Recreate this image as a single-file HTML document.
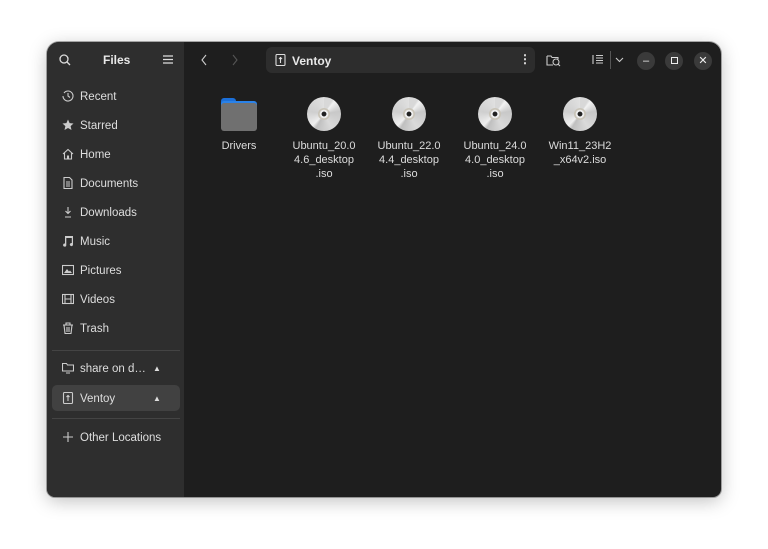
<!DOCTYPE html><html><head><style>
*{margin:0;padding:0;box-sizing:border-box}
body{width:768px;height:549px;background:#fff;font-family:"Liberation Sans",sans-serif;overflow:hidden;position:relative}
.win{position:absolute;left:47px;top:42px;width:674px;height:455px;border-radius:12px 12px 8px 8px;background:#1e1e1e;overflow:hidden;box-shadow:0 4px 18px rgba(0,0,0,.25),0 0 0 1px rgba(0,0,0,.3)}
.side{position:absolute;left:0;top:0;width:137px;height:455px;background:#2e2e2e;color:#dedede}
.it{position:absolute;left:5px;width:128px;height:26px;font-size:11.5px;line-height:28px;padding-left:28px}
.it svg{position:absolute;left:10px;top:7px}
.sep{position:absolute;left:5px;width:128px;height:1px;background:#444}
.t{position:absolute;color:#e8e8e8}
.lab{position:absolute;width:80px;text-align:center;font-size:11px;line-height:14px;color:#dcdcdc;top:96px}
.disc{position:absolute;top:55px;width:34px;height:34px;border-radius:50%;background:conic-gradient(#d8d8d8 0 30deg,#f2f2f2 40deg,#c8c8c8 80deg,#dadada 150deg,#bfbfbf 210deg,#efefef 225deg,#cfcfcf 280deg,#e0e0e0 360deg)}
.disc:after{content:"";position:absolute;left:11px;top:11px;width:12px;height:12px;border-radius:50%;background:radial-gradient(#222 0 2.2px,#eee 2.6px 4px,#c9c4b8 4.5px)}
.btn{position:absolute;top:10px;width:18px;height:18px;border-radius:50%;background:#3a3a3a;color:#eee;font-size:11px;text-align:center;line-height:18px}
</style></head><body>
<div class="win">
<div class="side">
<svg style="position:absolute;left:12px;top:12px" width="12" height="12" viewBox="0 0 12 12" fill="none" stroke="#ddd" stroke-width="1.3"><circle cx="5" cy="5" r="4"/><path d="M8 8l3 3"/></svg>
<div class="t" style="left:56px;top:11px;font-size:12px;font-weight:bold">Files</div>
<svg style="position:absolute;left:116px;top:13px" width="10" height="9" stroke="#ddd" stroke-width="1.2"><path d="M0 1h10M0 4.5h10M0 8h10"/></svg>
<div class="it" style="top:41px"><svg width="12" height="12" fill="none" stroke="#ccc" stroke-width="1.1"><path d="M2 3a5 5 0 1 1-1 3"/><path d="M6 3v3l2 1.5"/></svg>Recent</div>
<div class="it" style="top:70px"><svg width="12" height="12"><path fill="#ccc" d="M6 0.5l1.6 3.6 3.9.4-2.9 2.6.9 3.9L6 9 2.5 11l.9-3.9L.5 4.5l3.9-.4z"/></svg>Starred</div>
<div class="it" style="top:99px"><svg width="12" height="12" fill="none" stroke="#ccc" stroke-width="1.1"><path d="M1 6L6 1.5 11 6M2.5 5v6h3V8h1v3h3V5"/></svg>Home</div>
<div class="it" style="top:128px"><svg width="12" height="12" fill="none" stroke="#ccc" stroke-width="1.1"><path d="M2 .5h5.5l2.5 2.5v8.5H2z M4 5h4M4 7h4M4 9h4"/></svg>Documents</div>
<div class="it" style="top:157px"><svg width="12" height="12" fill="none" stroke="#ccc" stroke-width="1.1"><path d="M6 1v6M3.5 5L6 7.5 8.5 5M3 11h6"/></svg>Downloads</div>
<div class="it" style="top:186px"><svg width="12" height="12" fill="#ccc"><path d="M3 1h8v8.5a1.6 1.6 0 1 1-1.2-1.5V3H4.3v7a1.6 1.6 0 1 1-1.3-1.5z"/></svg>Music</div>
<div class="it" style="top:215px"><svg width="12" height="12" fill="none" stroke="#ccc" stroke-width="1.1"><rect x=".5" y="1.5" width="11" height="9"/><path fill="#ccc" stroke="none" d="M2 9l3-4 2 2.5 1-1 2 2.5z"/></svg>Pictures</div>
<div class="it" style="top:244px"><svg width="12" height="12" fill="none" stroke="#ccc" stroke-width="1.1"><rect x=".5" y="1.5" width="11" height="9"/><path d="M3 1.5v9M9 1.5v9M3 6h6"/></svg>Videos</div>
<div class="it" style="top:273px"><svg width="12" height="12" fill="none" stroke="#ccc" stroke-width="1.1"><path d="M1 3h10M4 3V1h4v2M2 3l1 8.5h6l1-8.5M5 5v5M7 5v5"/></svg>Trash</div>
<div class="sep" style="top:308px"></div>
<div class="it" style="top:313px"><svg width="12" height="12" fill="none" stroke="#ccc" stroke-width="1.1"><path d="M.5 1.5h4l1 1.5h6v6h-11zM4 11h4"/></svg>share on d… <span style="position:absolute;left:101px;font-size:8px">▲</span></div>
<div class="it" style="top:343px;background:#414141;border-radius:5px"><svg width="12" height="12" fill="none" stroke="#ccc" stroke-width="1.1"><rect x="1.5" y=".5" width="9" height="11" rx="1"/><path d="M6 3v6M4.5 5L6 3.5 7.5 5"/></svg>Ventoy <span style="position:absolute;left:101px;font-size:8px">▲</span></div>
<div class="sep" style="top:376px"></div>
<div class="it" style="top:382px"><svg width="12" height="12" stroke="#ccc" stroke-width="1.1"><path d="M6 1v10M1 6h10"/></svg>Other Locations</div>
</div>
<svg style="position:absolute;left:153px;top:12px" width="8" height="12" fill="none" stroke="#ccc" stroke-width="1.1"><path d="M6 1L2 6l4 5"/></svg>
<svg style="position:absolute;left:184px;top:12px" width="8" height="12" fill="none" stroke="#555" stroke-width="1.1"><path d="M2 1l4 5-4 5"/></svg>
<div style="position:absolute;left:219px;top:5px;width:269px;height:26px;background:#2d2d2d;border-radius:6px"></div>
<svg style="position:absolute;left:228px;top:12px" width="11" height="12" fill="none" stroke="#ddd" stroke-width="1.1"><rect x="1" y=".5" width="9" height="11" rx="1"/><path d="M5.5 3v6M4 5l1.5-1.5L7 5"/></svg>
<div class="t" style="left:245px;top:12px;font-size:12px;font-weight:bold">Ventoy</div>
<div class="t" style="left:472px;top:10px;font-size:12px;font-weight:bold">⋮</div>
<svg style="position:absolute;left:499px;top:11px" width="15" height="14" fill="none" stroke="#ccc" stroke-width="1.1"><path d="M1 3h4l1 1.5h6V6M1 3v9h6"/><circle cx="10" cy="9" r="3"/><path d="M12 11l2 2"/></svg>
<svg style="position:absolute;left:545px;top:12px" width="12" height="11" stroke="#ccc" stroke-width="1.1"><path d="M1 1v9M4 1.5h7M4 4h7M4 6.5h7M4 9h7"/></svg>
<div style="position:absolute;left:563px;top:9px;width:1px;height:18px;background:#555"></div>
<svg style="position:absolute;left:568px;top:15px" width="9" height="6" fill="none" stroke="#ccc" stroke-width="1.1"><path d="M1 1l3.5 3.5L8 1"/></svg>
<div class="btn" style="left:590px">–</div>
<div class="btn" style="left:618px"><span style="display:inline-block;width:7px;height:7px;border:1.3px solid #eee;margin-top:5px;vertical-align:top"></span></div>
<div class="btn" style="left:647px">✕</div>
<div style="position:absolute;left:174px;top:56px;width:36px;height:33px">
<div style="position:absolute;left:0;top:0;width:15px;height:8px;background:#1b6fd9;border-radius:3px 3px 0 0"></div>
<div style="position:absolute;left:0;top:3px;width:36px;height:8px;background:#2a82e8;border-radius:3px"></div>
<div style="position:absolute;left:0;top:5px;width:36px;height:28px;background:#707070;border-radius:3px"></div></div>
<div class="lab" style="left:152px;top:97px">Drivers</div>
<div class="disc" style="left:260px"></div><div class="lab" style="left:237px;top:97px">Ubuntu_20.0<br>4.6_desktop<br>.iso</div>
<div class="disc" style="left:345px"></div><div class="lab" style="left:322px;top:97px">Ubuntu_22.0<br>4.4_desktop<br>.iso</div>
<div class="disc" style="left:431px"></div><div class="lab" style="left:408px;top:97px">Ubuntu_24.0<br>4.0_desktop<br>.iso</div>
<div class="disc" style="left:516px"></div><div class="lab" style="left:493px;top:97px">Win11_23H2<br>_x64v2.iso</div>
</div>
</body></html>
